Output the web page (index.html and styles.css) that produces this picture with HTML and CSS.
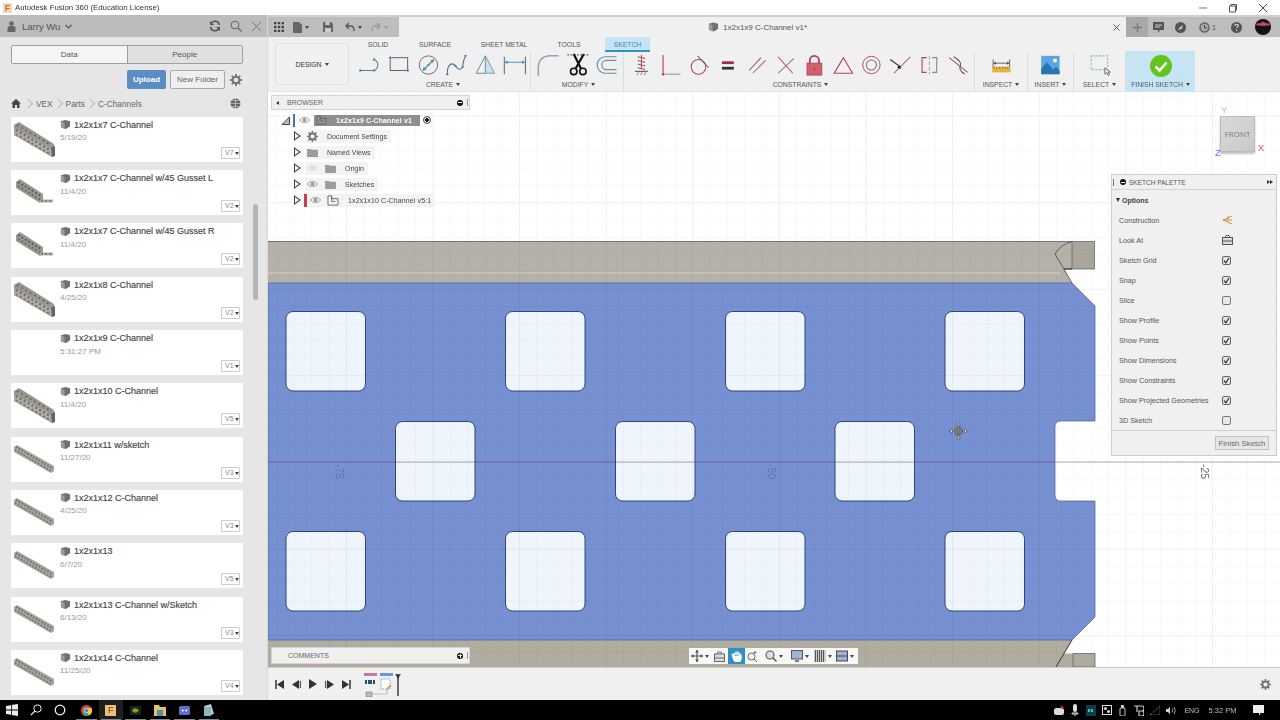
FILE: index.html
```html
<!DOCTYPE html>
<html lang="en">
<head>
<meta charset="utf-8">
<title>Autodesk Fusion 360</title>
<link rel="stylesheet" href="styles.css">
</head>
<body>
<svg class="defs" width="0" height="0" aria-hidden="true">
  <symbol id="box" viewBox="0 0 12 12"><path d="M1 2.500 6 1l5 1.500V8L6.500 11 1 9z" fill="#6f6f6f"/><path d="M1 2.500 5 4v7L1 9z" fill="#9a9a9a"/></symbol>
  <symbol id="folder" viewBox="0 0 12 10"><path d="M0 1h4l1 1h7v8H0z" fill="#9b9b9b"/></symbol>
  <symbol id="eye" viewBox="0 0 12 8"><path d="M.5 4C3 .5 9 .5 11.500 4 9 7.500 3 7.500.5 4z" fill="none" stroke="#8f8f8f"/><circle cx="6" cy="4" r="2" fill="#8f8f8f"/></symbol>
  <symbol id="tree-comp" viewBox="0 0 13 12"><path d="M1 1h4v3h7v7H1z" fill="none" stroke="#666" stroke-width="1"/><path d="M5 1v6h4" fill="none" stroke="#666"/></symbol>
  <symbol id="gear" viewBox="0 0 12 12"><circle cx="6" cy="6" r="3.300" fill="none" stroke="#777" stroke-width="2"/><path d="M6 0v2.500M6 9.500V12M0 6h2.500M9.500 6H12M1.800 1.800l1.800 1.800M8.400 8.400l1.800 1.800M1.800 10.200l1.800-1.800M8.400 3.600l1.800-1.800" stroke="#777" stroke-width="1.800"/></symbol>
  <symbol id="tick" viewBox="0 0 9 9"><rect x=".5" y=".5" width="8" height="8" rx="1.500" fill="#e4e4e4" stroke="#666"/><path d="M2 4.500 3.800 6.800 7 2" fill="none" stroke="#222" stroke-width="1.100"/></symbol>
  <symbol id="untick" viewBox="0 0 9 9"><rect x=".5" y=".5" width="8" height="8" rx="1.500" fill="#e8e8e8" stroke="#777"/></symbol>
  <symbol id="thumb-a" viewBox="0 0 42 38">
    <path d="M1 5 6 2 41 24 42 35 39 37 1 15z" fill="#98968f"/>
    <path d="M1 14 39 36 39 29 2 8z" fill="#b0ada6"/>
    <path d="M4 5 38 25" stroke="#55554f" stroke-width="1.500" stroke-dasharray="1.500 3.500"/>
    <path d="M3 10 37 30" stroke="#6d6c66" stroke-width="2.200" stroke-dasharray="2 2.500"/>
    <path d="M3 14 37 34" stroke="#75746e" stroke-width="1.800" stroke-dasharray="2 2.500"/>
    <path d="M38 28 42 26 42 36 39 37z" fill="#66655f"/>
  </symbol>
  <symbol id="thumb-b" viewBox="0 0 42 38">
    <path d="M3 9 7 6 30 21 30 27 27 30 3 15z" fill="#98968f"/>
    <path d="M5 9 28 23" stroke="#5a5a54" stroke-width="1.800" stroke-dasharray="2 2"/>
    <path d="M5 13 28 27" stroke="#6d6c66" stroke-width="1.800" stroke-dasharray="2 2"/>
    <path d="M27 28 40 28" stroke="#b0aea8" stroke-width="3"/>
    <path d="M28 28 40 28" stroke="#555" stroke-width="1" stroke-dasharray="2 2"/>
  </symbol>
  <symbol id="thumb-c" viewBox="0 0 42 38">
    <path d="M1 7 4 5 41 26 41 31 38 33 1 12z" fill="#a5a39c"/>
    <path d="M3 7 39 28" stroke="#5a5a55" stroke-width="1.300" stroke-dasharray="1.500 1.800"/>
    <path d="M2 10 38 31" stroke="#6a6a64" stroke-width="1.400" stroke-dasharray="1.500 1.800"/>
  </symbol>
</svg>

<header class="titlebar">
  <span class="app-logo">F</span>
  <span class="app-title">Autodesk Fusion 360 (Education License)</span>
  <div class="win-controls">
    <svg width="10" height="10" viewBox="0 0 10 10"><path d="M1 5h8" stroke="#777"/></svg>
    <svg width="10" height="10" viewBox="0 0 10 10"><path d="M1.500 3h6v6h-6zM3 3V1.500h5.500V7H7.500" fill="none" stroke="#555"/></svg>
    <svg width="10" height="10" viewBox="0 0 10 10"><path d="M1 1l8 8M9 1 1 9" stroke="#444"/></svg>
  </div>
</header>

<main class="app">
  <aside class="side">
    <div class="side-head">
      <svg width="9" height="11" viewBox="0 0 9 11"><circle cx="4.500" cy="2.500" r="2.300" fill="#666"/><path d="M.5 11V7q0-2 2-2h4q2 0 2 2v4z" fill="#666"/></svg>
      <span class="user">Larry Wu</span>
      <svg width="7" height="5" viewBox="0 0 7 5"><path d="M.5 1l3 3 3-3" fill="none" stroke="#555" stroke-width="1.200"/></svg>
      <span class="grow"></span>
      <svg class="h-act" width="12" height="12" viewBox="0 0 12 12"><path d="M10.500 5A4.600 4.600 0 0 0 2 3.500M1.500 7A4.600 4.600 0 0 0 10 8.500" fill="none" stroke="#555" stroke-width="1.500"/><path d="M1 1v4h4zM11 11V7H7z" fill="#555"/></svg>
      <svg class="h-act" width="12" height="12" viewBox="0 0 12 12"><circle cx="5" cy="5" r="3.800" fill="none" stroke="#666" stroke-width="1.100"/><path d="M8 8l3.500 3.500" stroke="#666" stroke-width="1.200"/></svg>
      <svg width="11" height="11" viewBox="0 0 11 11"><path d="M1 1l9 9M10 1l-9 9" stroke="#777"/></svg>
    </div>
    <div class="side-tabs"><span class="stab on">Data</span><span class="stab">People</span></div>
    <div class="side-actions">
      <button class="btn-upload">Upload</button>
      <button class="btn-folder">New Folder</button>
      <svg class="icon12" viewBox="0 0 12 12"><use href="#gear"/></svg>
    </div>
    <nav class="crumbs">
      <svg width="10" height="9" viewBox="0 0 10 9"><path d="M0 4.500 5 0l5 4.500H8.500V9H6V6H4v3H1.500V4.500z" fill="#444"/></svg>
      <span class="sep"></span><span>VEX</span><span class="sep"></span><span>Parts</span><span class="sep"></span><span>C-Channels</span>
      <span class="grow"></span>
      <svg width="11" height="11" viewBox="0 0 11 11"><circle cx="5.500" cy="5.500" r="5" fill="#666"/><path d="M0 5.500h11M5.500 0v11M2 2q3.500 2 7 0M2 9q3.500-2 7 0" stroke="#ddd" stroke-width=".6" fill="none"/></svg>
    </nav>
    <div class="cards">
      <article class="card"><svg class="thumb"><use href="#thumb-a"/></svg><div class="info"><div class="name"><svg class="cube"><use href="#box"/></svg>1x2x1x7 C-Channel</div><div class="date">5/19/20</div></div><span class="ver">V7<i class="car"></i></span></article>
      <article class="card"><svg class="thumb"><use href="#thumb-b"/></svg><div class="info"><div class="name"><svg class="cube"><use href="#box"/></svg>1x2x1x7 C-Channel w/45 Gusset L</div><div class="date">11/4/20</div></div><span class="ver">V2<i class="car"></i></span></article>
      <article class="card"><svg class="thumb"><use href="#thumb-b"/></svg><div class="info"><div class="name"><svg class="cube"><use href="#box"/></svg>1x2x1x7 C-Channel w/45 Gusset R</div><div class="date">11/4/20</div></div><span class="ver">V2<i class="car"></i></span></article>
      <article class="card"><svg class="thumb"><use href="#thumb-a"/></svg><div class="info"><div class="name"><svg class="cube"><use href="#box"/></svg>1x2x1x8 C-Channel</div><div class="date">4/25/20</div></div><span class="ver">V2<i class="car"></i></span></article>
      <article class="card"><span class="thumb"></span><div class="info"><div class="name"><svg class="cube"><use href="#box"/></svg>1x2x1x9 C-Channel</div><div class="date">5:31:27 PM</div></div><span class="ver">V1<i class="car"></i></span></article>
      <article class="card"><svg class="thumb"><use href="#thumb-a"/></svg><div class="info"><div class="name"><svg class="cube"><use href="#box"/></svg>1x2x1x10 C-Channel</div><div class="date">11/4/20</div></div><span class="ver">V5<i class="car"></i></span></article>
      <article class="card"><svg class="thumb"><use href="#thumb-c"/></svg><div class="info"><div class="name"><svg class="cube"><use href="#box"/></svg>1x2x1x11 w/sketch</div><div class="date">11/27/20</div></div><span class="ver">V3<i class="car"></i></span></article>
      <article class="card"><svg class="thumb"><use href="#thumb-c"/></svg><div class="info"><div class="name"><svg class="cube"><use href="#box"/></svg>1x2x1x12 C-Channel</div><div class="date">4/25/20</div></div><span class="ver">V3<i class="car"></i></span></article>
      <article class="card"><svg class="thumb"><use href="#thumb-c"/></svg><div class="info"><div class="name"><svg class="cube"><use href="#box"/></svg>1x2x1x13</div><div class="date">6/7/20</div></div><span class="ver">V5<i class="car"></i></span></article>
      <article class="card"><svg class="thumb"><use href="#thumb-c"/></svg><div class="info"><div class="name"><svg class="cube"><use href="#box"/></svg>1x2x1x13 C-Channel w/Sketch</div><div class="date">6/13/20</div></div><span class="ver">V3<i class="car"></i></span></article>
      <article class="card"><svg class="thumb"><use href="#thumb-c"/></svg><div class="info"><div class="name"><svg class="cube"><use href="#box"/></svg>1x2x1x14 C-Channel</div><div class="date">11/25/20</div></div><span class="ver">V4<i class="car"></i></span></article>
    </div>
    <div class="scroll-thumb"></div>
  </aside>

  <section class="work">
    <div class="tabbar">
      <div class="qat">
        <svg width="10" height="10" viewBox="0 0 10 10"><path d="M0 1h10M0 5h10M0 9h10" stroke="#444" stroke-width="2.400" stroke-dasharray="2.400 1.400"/></svg>
        <svg class="q2" width="9" height="11" viewBox="0 0 9 11"><path d="M0 0h6l3 3v8H0z" fill="#666"/></svg><i class="car q3"></i>
        <svg class="q4" width="10" height="10" viewBox="0 0 10 10"><path d="M0 0h8l2 2v8H0z" fill="#666"/><path d="M2.500 0h4v3h-4zM2 6h6v4H2z" fill="#ccc"/></svg>
        <svg class="q5" width="10" height="10" viewBox="0 0 10 10"><path d="M4 1 1 4l3 3M1 4h5q3 0 3 5" fill="none" stroke="#555" stroke-width="1.300"/></svg><i class="car q6"></i>
        <svg class="q7" width="10" height="10" viewBox="0 0 10 10"><path d="M6 1l3 3-3 3M9 4H4Q1 4 1 9" fill="none" stroke="#999" stroke-width="1.300"/></svg><i class="car q8"></i>
      </div>
      <div class="doc-tab">
        <svg class="doc-icon" width="11" height="12"><use href="#box"/></svg>
        <span>1x2x1x9 C-Channel v1*</span>
        <svg class="doc-close" width="7" height="7" viewBox="0 0 7 7"><path d="M.5.5l6 6M6.500.5l-6 6" stroke="#555"/></svg>
      </div>
      <div class="tools-right">
        <span class="plus"><svg width="9" height="9" viewBox="0 0 9 9"><path d="M4.500 0v9M0 4.500h9" stroke="#777" stroke-width="1.400"/></svg></span>
        <svg class="r1" width="11" height="11" viewBox="0 0 11 11"><path d="M0 0h11v8H7l-2 3V8H0z" fill="#555"/><path d="M2 3h7M2 5h5" stroke="#ccc"/></svg>
        <svg class="r2" width="11" height="11" viewBox="0 0 11 11"><circle cx="5.500" cy="5.500" r="5.500" fill="#555"/><path d="M3 8l2-3 3-2-1.500 4z" fill="#ccc"/></svg>
        <svg class="r3" width="11" height="11" viewBox="0 0 11 11"><circle cx="5.500" cy="5.500" r="4.500" fill="#aaa" stroke="#666" stroke-width="1.500"/><path d="M5.500 3v3H8" stroke="#444" fill="none"/></svg>
        <span class="r-num">1</span>
        <svg class="r4" width="11" height="11" viewBox="0 0 11 11"><circle cx="5.500" cy="5.500" r="5.500" fill="#555"/><path d="M3.800 4q.2-1.800 1.800-1.800 1.700 0 1.700 1.500c0 1.200-1.700 1.300-1.700 2.600M5.500 7.800v1.200" stroke="#ddd" fill="none" stroke-width="1.100"/></svg>
        <svg class="r5" width="16" height="16" viewBox="0 0 16 16"><circle cx="8" cy="8" r="8" fill="#111"/><path d="M.5 6Q3 3 5 4.500 8 1 11 4.500 14 3 15.500 6 8 8 .5 6z" fill="#b94a5a"/></svg>
      </div>
    </div>

    <div class="ribbon">
      <button class="design">DESIGN<i class="car"></i></button>
      <div class="ribbon-main">
        <div class="rtabs">
          <span class="rtab t1">SOLID</span><span class="rtab t2">SURFACE</span><span class="rtab t3">SHEET METAL</span><span class="rtab t4">TOOLS</span><span class="rtab t5">SKETCH</span>
        </div>
        <div class="groups">
          <div class="group g-create">
            <div class="icons">
              <svg class="ico" viewBox="0 0 28 24"><path d="M3 18H18M18 18A6.500 6.500 0 0 0 18 6" fill="none" stroke="#557f9c" stroke-width="1.100"/><g fill="#3b8fc0"><circle cx="3" cy="18" r="1.300"/><circle cx="18" cy="18" r="1.300"/><circle cx="18" cy="6" r="1.300"/></g></svg>
              <svg class="ico" viewBox="0 0 28 24"><rect x="4" y="4" width="19" height="14" fill="none" stroke="#666" stroke-width="1.100"/><g fill="#3b8fc0"><circle cx="4" cy="4" r="1.300"/><circle cx="23" cy="18" r="1.300"/></g></svg>
              <svg class="ico" viewBox="0 0 28 24"><circle cx="14" cy="12" r="10" fill="none" stroke="#666" stroke-width="1"/><path d="M8 18 20 6" stroke="#3b8fc0" stroke-width="1.200"/><path d="M20 6l-4 .8 3.200 3.200zM8 18l4-.8-3.200-3.200z" fill="#3b8fc0"/><circle cx="14" cy="12" r="1.200" fill="#3b8fc0"/></svg>
              <svg class="ico" viewBox="0 0 28 24"><path d="M4 22C4 10 10 9 13 13 16 18 20 18 21 12 21.500 8 23 4 24 2" fill="none" stroke="#666" stroke-width="1.100"/><g fill="#3b8fc0"><circle cx="4" cy="22" r="1.300"/><circle cx="13" cy="13" r="1.300"/><circle cx="21" cy="14" r="1.300"/><circle cx="24" cy="2" r="1.300"/></g></svg>
              <svg class="ico" viewBox="0 0 28 24"><path d="M14 2 4 21H14z" fill="#f2f2f2" stroke="#777"/><path d="M14 2 24 21H14z" fill="#cfe0e8" stroke="#6c9bb0"/></svg>
              <svg class="ico" viewBox="0 0 28 24"><path d="M3 3V22M26 3V22" stroke="#666" stroke-width="1.100"/><path d="M4 9H25" stroke="#3b8fc0"/><path d="M3.500 9l3-2v4zM25.500 9l-3-2v4z" fill="#3b8fc0"/></svg>
            </div>
            <div class="glabel">CREATE<i class="car"></i></div>
          </div>
          <div class="group g-modify">
            <div class="icons">
              <svg class="ico" viewBox="0 0 28 24"><path d="M3 24V15Q3 3 15 2H25" fill="none" stroke="#8fa5b0" stroke-width="1.600"/></svg>
              <svg class="ico" viewBox="0 0 28 24"><path d="M3 1H27" stroke="#333" stroke-dasharray="2 1.500"/><path d="M10 0 18 16M21 0 12 16" stroke="#111" stroke-width="2.400"/><circle cx="10" cy="19" r="3.500" fill="none" stroke="#111" stroke-width="1.800"/><circle cx="20" cy="19" r="3.500" fill="none" stroke="#111" stroke-width="1.800"/></svg>
              <svg class="ico" viewBox="0 0 28 24"><path d="M25 3H13A9 9 0 0 0 13 21H25" fill="none" stroke="#4b98c0" stroke-width="1.300"/><path d="M25 7H14A5 5 0 0 0 14 17H25" fill="none" stroke="#888" stroke-width="1.300"/></svg>
            </div>
            <div class="glabel">MODIFY<i class="car"></i></div>
          </div>
          <div class="group g-constraints">
            <div class="icons">
              <svg class="ico" viewBox="0 0 28 24"><path d="M14 1V16M10 3 18 5M10 7l8 2M10 11l8 2M10 15l8 2" stroke="#b54256" stroke-width="1.100"/><path d="M7 19H21" stroke="#666" stroke-width="1.300"/><path d="M9 23l2-3M13 23l2-3M17 23l2-3" stroke="#777"/></svg>
              <svg class="ico" viewBox="0 0 28 24"><path d="M6 1V22" stroke="#b54256" stroke-width="1.200"/><path d="M6 22H25" stroke="#999" stroke-width="1.200"/><circle cx="6" cy="22" r="1.400" fill="#b54256"/></svg>
              <svg class="ico" viewBox="0 0 28 24"><circle cx="13" cy="14" r="8" fill="none" stroke="#b54256" stroke-width="1.100"/><path d="M12 2 24 15" stroke="#666" stroke-width="1.100"/></svg>
              <svg class="ico" viewBox="0 0 28 24"><rect x="8" y="8" width="13" height="3" fill="#a92a44"/><rect x="8" y="14" width="13" height="3" fill="#333"/></svg>
              <svg class="ico" viewBox="0 0 28 24"><path d="M6 18 19 4" stroke="#b54256" stroke-width="1.100"/><path d="M10 21 24 7" stroke="#777" stroke-width="1.100"/></svg>
              <svg class="ico" viewBox="0 0 28 24"><path d="M6 3 22 21" stroke="#b54256" stroke-width="1.100"/><path d="M6 21 23 5" stroke="#777" stroke-width="1.100"/></svg>
              <svg class="ico" viewBox="0 0 28 24"><path d="M9 11V7a5 5 0 0 1 10 0v4" fill="none" stroke="#b54256" stroke-width="2"/><rect x="6" y="10" width="16" height="13" fill="#d0626f" stroke="#b54256"/><path d="M14 15v3" stroke="#8d2a3c"/></svg>
              <svg class="ico" viewBox="0 0 28 24"><path d="M14 4 24 21H4z" fill="none" stroke="#b54256" stroke-width="1.200"/></svg>
              <svg class="ico" viewBox="0 0 28 24"><circle cx="14" cy="12" r="9.500" fill="none" stroke="#b54256" stroke-width="1"/><circle cx="14" cy="12" r="5.500" fill="none" stroke="#777" stroke-width="1.100"/></svg>
              <svg class="ico" viewBox="0 0 28 24"><path d="M7 21 25 3" stroke="#b54256" stroke-width="1.100"/><path d="M3 6 14 14" stroke="#222" stroke-width="1.100"/><path d="M15 16l-4.500-.8 2.200-3z" fill="#111"/></svg>
              <svg class="ico" viewBox="0 0 28 24"><path d="M14 2V22" stroke="#999" stroke-dasharray="4 2"/><path d="M11 4H6V20H11" fill="none" stroke="#b54256" stroke-width="1.200"/><path d="M17 4H22V20H17" fill="none" stroke="#888" stroke-width="1.200"/></svg>
              <svg class="ico" viewBox="0 0 28 24"><path d="M4 4 24 20" stroke="#b54256" stroke-width="1.100"/><path d="M9 3Q18 8 16 13 14 18 21 22" fill="none" stroke="#555" stroke-width="1.100"/></svg>
            </div>
            <div class="glabel">CONSTRAINTS<i class="car"></i></div>
          </div>
          <div class="group g-inspect">
            <div class="icons one">
              <svg class="ico" viewBox="0 0 28 24"><path d="M5 6V14M23 6V14M6 10H22" stroke="#555"/><path d="M5 10l3-1.800v3.600zM23 10l-3-1.800v3.600z" fill="#555"/><rect x="4" y="14" width="20" height="6" fill="#e8b23c"/><path d="M6 14v2M9 14v2M12 14v2M15 14v2M18 14v2M21 14v2" stroke="#8a6a16"/></svg>
            </div>
            <div class="glabel">INSPECT<i class="car"></i></div>
          </div>
          <div class="group g-insert">
            <div class="icons one">
              <svg class="ico" viewBox="0 0 28 24"><rect x="4" y="2" width="20" height="20" fill="#5aa6e0"/><path d="M4 22V16L10 9 17 17 20 14 24 18V22z" fill="#2b74b4"/><circle cx="19" cy="7" r="2.200" fill="#fff"/></svg>
            </div>
            <div class="glabel">INSERT<i class="car"></i></div>
          </div>
          <div class="group g-select">
            <div class="icons one">
              <svg class="ico" viewBox="0 0 28 24"><rect x="5" y="2" width="18" height="15" fill="none" stroke="#8fc69a" stroke-width="1.300" stroke-dasharray="2.500 1.500"/><path d="M20 15v7l2-1.500 1.500 3 1.500-.7-1.500-3h2.500z" fill="#eee" stroke="#444" stroke-width=".8"/></svg>
            </div>
            <div class="glabel">SELECT<i class="car"></i></div>
          </div>
          <div class="group g-finish">
            <div class="icons one finish-icon">
              <svg width="24" height="24" viewBox="0 0 24 24"><circle cx="12" cy="12" r="11" fill="#62c41d"/><path d="M6.500 12.500 10.500 16.500 17.500 8.500" fill="none" stroke="#fff" stroke-width="2.600"/></svg>
            </div>
            <div class="glabel">FINISH SKETCH<i class="car"></i></div>
          </div>
        </div>
      </div>
    </div>

    <div class="canvas">
      <svg class="scene" viewBox="268 92 1012 575" width="1012" height="575">
        <defs>
          <pattern id="minor" patternUnits="userSpaceOnUse" x="692.300" y="462" width="17.320" height="17.320"><path d="M0 0V17.320M0 0H17.320" stroke="#000" stroke-opacity=".05" stroke-width="1"/></pattern>
          <pattern id="major" patternUnits="userSpaceOnUse" x="692.300" y="462" width="86.600" height="86.600"><path d="M0 0V86.600M0 0H86.600" stroke="#000" stroke-opacity=".06" stroke-width="1"/></pattern>
        </defs>
        <rect x="268" y="92" width="1012" height="575" fill="#fff"/>
        <path d="M268 241.500H1072V269H1064L1072 283H268z" fill="#b5b1a8"/>
        <path d="M268 241.500H1072" stroke="#5e5e5c" stroke-width=".8"/>
        <path d="M268 273H1060" stroke="#c6c2b8" stroke-width="2"/>
        <path d="M1072 241.500Q1061 244 1055 254L1072 283" fill="none" stroke="#555" stroke-width=".9"/>
        <rect x="1072" y="241.500" width="22.500" height="27.500" fill="#aaa69c" stroke="#666" stroke-width=".8"/>
        <path d="M1064 269H1072" stroke="#222" stroke-width="1.200"/>
        <path d="M268 640H1072L1064 653.500H1073V667H268z" fill="#b0ac9f"/>
        <path d="M1072 640 1056 667" stroke="#333"/>
        <path d="M1073 667V653.500H1095V667z" fill="#aeaa9f" stroke="#666" stroke-width=".8"/>
        <path d="M268 283H1072L1095 306V421H1061Q1055 421 1055 427V495Q1055 501 1061 501H1095V617L1072 640H268z" fill="#7690d2" stroke="#4a5c9a" stroke-width=".7"/>
        <g fill="#eff5fc" stroke="#24356f" stroke-width=".9">
          <rect x="286" y="311.500" width="79.500" height="79.500" rx="7"/>
          <rect x="505.500" y="311.500" width="79.500" height="79.500" rx="7"/>
          <rect x="725.500" y="311.500" width="79.500" height="79.500" rx="7"/>
          <rect x="945" y="311.500" width="79.500" height="79.500" rx="7"/>
          <rect x="395.500" y="421.500" width="79.500" height="79.500" rx="7"/>
          <rect x="615.500" y="421.500" width="79.500" height="79.500" rx="7"/>
          <rect x="835" y="421.500" width="79.500" height="79.500" rx="7"/>
          <rect x="286" y="531.500" width="79.500" height="79.500" rx="7"/>
          <rect x="505.500" y="531.500" width="79.500" height="79.500" rx="7"/>
          <rect x="725.500" y="531.500" width="79.500" height="79.500" rx="7"/>
          <rect x="945" y="531.500" width="79.500" height="79.500" rx="7"/>
        </g>
        <rect x="268" y="92" width="1012" height="575" fill="url(#minor)"/>
        <rect x="268" y="92" width="1012" height="575" fill="url(#major)"/>
        <path d="M268 462H1280" stroke="#7a3f60" stroke-opacity=".45" stroke-width="1"/>
        <g class="dim">
          <text transform="translate(336 464) rotate(90)">-75</text>
          <text transform="translate(768 464) rotate(90)">-50</text>
          <text class="dim-w" transform="translate(1201 464) rotate(90)">-25</text>
        </g>
        <g class="cursor">
          <circle cx="958.500" cy="431" r="4.500" fill="#666"/>
          <path d="M955 429h7M955 431h7M955 433h7" stroke="#9aa6c8" stroke-width=".6"/>
          <g fill="#e8ecf5" stroke="#333" stroke-width=".7">
            <circle cx="958.500" cy="424" r="1.400"/>
            <circle cx="958.500" cy="438" r="1.400"/>
            <circle cx="951.500" cy="431" r="1.400"/>
            <circle cx="965.500" cy="431" r="1.400"/>
          </g>
        </g>
      </svg>

      <div class="panel browser"><i class="back"></i><span>BROWSER</span><span class="grow"></span><span class="dot minus"></span><span class="bar"></span></div>
      <div class="tree">
        <div class="row r-root">
          <svg width="9" height="9" viewBox="0 0 9 9"><path d="M8.500 1V8.500H1z" fill="#bbb" stroke="#444"/></svg>
          <span class="mark blue"></span>
          <svg class="t-eye" width="11" height="8"><use href="#eye"/></svg>
          <span class="root-name"><svg width="11" height="10"><use href="#tree-comp"/></svg><b>1x2x1x9 C-Channel v1</b></span>
          <span class="radio"></span>
        </div>
        <div class="row r-doc"><i class="tri"></i><span class="rowbg"><svg width="11" height="11"><use href="#gear"/></svg><span>Document Settings</span></span></div>
        <div class="row r-view"><i class="tri"></i><span class="rowbg"><svg width="11" height="9"><use href="#folder"/></svg><span>Named Views</span></span></div>
        <div class="row r-origin"><i class="tri"></i><span class="rowbg"><svg class="faded" width="11" height="8"><use href="#eye"/></svg><svg width="11" height="9"><use href="#folder"/></svg><span>Origin</span></span></div>
        <div class="row r-sk"><i class="tri"></i><span class="rowbg"><svg width="11" height="8"><use href="#eye"/></svg><svg width="11" height="9"><use href="#folder"/></svg><span>Sketches</span></span></div>
        <div class="row r-comp"><i class="tri"></i><span class="mark red"></span><span class="rowbg"><svg width="11" height="8"><use href="#eye"/></svg><svg width="12" height="11"><use href="#tree-comp"/></svg><span>1x2x1x10 C-Channel v5:1</span></span></div>
      </div>

      <div class="cube-view">
        <span class="axis ay">Y</span><span class="axis ax">X</span><span class="axis az">Z</span>
        <div class="cube-face">FRONT</div>
      </div>

      <div class="palette">
        <div class="pal-head"><span class="bar lead"></span><span class="dot minus"></span><span>SKETCH PALETTE</span><span class="grow"></span><i class="fwd"></i><i class="fwd"></i></div>
        <div class="pal-body">
          <div class="pal-opt"><i class="down"></i>Options</div>
          <div class="pal-row"><span>Construction</span><svg class="pal-ctl" width="11" height="10" viewBox="0 0 11 10"><path d="M1 5 10 1M1 5h9M1 5l9 4" stroke="#c9913a" fill="none"/><path d="M6 1v8" stroke="#c9913a" stroke-dasharray="1 1"/></svg></div>
          <div class="pal-row"><span>Look At</span><svg class="pal-ctl" width="11" height="10" viewBox="0 0 11 10"><rect x=".5" y="2.500" width="10" height="7" fill="#ddd" stroke="#555"/><path d="M3 2.500 4 .5h3l1 2M1 6h9" stroke="#555" fill="none"/></svg></div>
          <div class="pal-row"><span>Sketch Grid</span><svg class="pal-ctl" width="9" height="9"><use href="#tick"/></svg></div>
          <div class="pal-row"><span>Snap</span><svg class="pal-ctl" width="9" height="9"><use href="#tick"/></svg></div>
          <div class="pal-row"><span>Slice</span><svg class="pal-ctl" width="9" height="9"><use href="#untick"/></svg></div>
          <div class="pal-row"><span>Show Profile</span><svg class="pal-ctl" width="9" height="9"><use href="#tick"/></svg></div>
          <div class="pal-row"><span>Show Points</span><svg class="pal-ctl" width="9" height="9"><use href="#tick"/></svg></div>
          <div class="pal-row"><span>Show Dimensions</span><svg class="pal-ctl" width="9" height="9"><use href="#tick"/></svg></div>
          <div class="pal-row"><span>Show Constraints</span><svg class="pal-ctl" width="9" height="9"><use href="#tick"/></svg></div>
          <div class="pal-row"><span>Show Projected Geometries</span><svg class="pal-ctl" width="9" height="9"><use href="#tick"/></svg></div>
          <div class="pal-row"><span>3D Sketch</span><svg class="pal-ctl" width="9" height="9"><use href="#untick"/></svg></div>
        </div>
        <div class="pal-foot"><button class="pal-finish">Finish Sketch</button></div>
      </div>

      <div class="panel comments"><span>COMMENTS</span><span class="grow"></span><span class="dot plusdot"></span><span class="bar"></span></div>

      <div class="navbar">
        <svg width="12" height="12" viewBox="0 0 12 12"><path d="M6 0v12M0 6h12" stroke="#555" stroke-width="1.200"/><path d="M6 0 4 2.500h4zM6 12l-2-2.500h4zM0 6l2.500-2v4zM12 6 9.500 4v4z" fill="#555"/></svg><i class="car"></i>
        <svg class="nv-cam" width="11" height="11" viewBox="0 0 11 11"><rect x=".5" y="3" width="10" height="7.500" fill="#ddd" stroke="#666"/><path d="M3 3l1-2h3l1 2M1 7h9" stroke="#666" fill="none"/></svg>
        <span class="nv-hand"><svg width="12" height="12" viewBox="0 0 12 12"><path d="M3 6V3M5 5V1.500M7 5V1.500M9 5.500V3M3 6 1.500 5 3 10q1 1.500 3 1.500h1q3 0 3-3V5" fill="#fff" stroke="#fff" stroke-width="1.500"/></svg></span>
        <svg class="nv-fit" width="11" height="11" viewBox="0 0 11 11"><circle cx="4.500" cy="5.500" r="3.500" fill="none" stroke="#666"/><path d="M7 8l3 3" stroke="#666"/><path d="M8 0v3M6.500 1.500h3" stroke="#777"/></svg>
        <svg class="nv-zoom" width="12" height="12" viewBox="0 0 12 12"><circle cx="5" cy="5" r="4" fill="#ddd" stroke="#555" stroke-width="1.100"/><path d="M8 8l3.500 3.500" stroke="#555" stroke-width="1.500"/></svg><i class="car"></i>
        <svg class="nv-disp" width="12" height="12" viewBox="0 0 12 12"><rect x=".5" y=".5" width="11" height="8.500" fill="#9fb6d0" stroke="#556"/><path d="M4 11h4" stroke="#556" stroke-width="1.500"/></svg><i class="car"></i>
        <svg class="nv-grid" width="12" height="12" viewBox="0 0 12 12"><rect width="12" height="12" fill="#ccc"/><path d="M1.500 0v12M3.500 0v12M5.500 0v12M7.500 0v12M9.500 0v12" stroke="#555"/></svg><i class="car"></i>
        <svg class="nv-view" width="12" height="12" viewBox="0 0 12 12"><rect x=".5" y="1" width="11" height="10" fill="#9fb6d0" stroke="#445"/><path d="M.5 6h11" stroke="#445"/></svg><i class="car"></i>
      </div>
    </div>

    <div class="timeline">
      <svg class="tl" width="9" height="9" viewBox="0 0 9 9"><path d="M1 0v9" stroke="#333" stroke-width="1.500"/><path d="M9 0v9L2 4.500z" fill="#333"/></svg>
      <svg class="tl" width="9" height="9" viewBox="0 0 9 9"><path d="M7 0v9L0 4.500z" fill="#333"/><path d="M8.300 1v7" stroke="#333"/></svg>
      <svg class="tl" width="9" height="10" viewBox="0 0 9 10"><path d="M1 0v10l8-5z" fill="#333"/></svg>
      <svg class="tl" width="9" height="9" viewBox="0 0 9 9"><path d="M2 0v9l7-4.500z" fill="#333"/><path d="M.7 1v7" stroke="#333"/></svg>
      <svg class="tl" width="9" height="9" viewBox="0 0 9 9"><path d="M0 0v9l7-4.500z" fill="#333"/><path d="M8 0v9" stroke="#333" stroke-width="1.500"/></svg>
      <svg class="tl-track" width="38" height="26" viewBox="0 0 38 26">
        <rect x="0" y="2" width="13" height="3" fill="#c87a9a"/><rect x="16" y="2" width="13" height="3" fill="#6d95d6"/>
        <path d="M2 9v4M5 9v4M7 9v4M10 9v4" stroke="#2b4f7a" stroke-width="2"/>
        <path d="M17 8h9v10h-9z" fill="#fff" stroke="#7aa4c9" stroke-dasharray="1.500 1"/>
        <path d="M23 18l4-4" stroke="#d88a2a" stroke-width="1.500"/>
        <rect x="2" y="21" width="6" height="5" fill="#bbb" stroke="#777" stroke-width=".6"/><path d="M9 23h14v-5" fill="none" stroke="#bbb"/>
        <path d="M31 3h6l-3 5z" fill="#555"/><path d="M34 4v21" stroke="#222" stroke-width="1.300"/>
      </svg>
      <span class="grow"></span>
      <svg class="tl-gear" width="11" height="11"><use href="#gear"/></svg>
    </div>
  </section>
</main>

<footer class="taskbar">
  <div class="tb-left">
    <svg class="tb first" width="12" height="12" viewBox="0 0 12 12"><path d="M0 2 5 1.200V5.600H0zM5.800 1 12 0V5.600H5.800zM0 6.400H5V10.800L0 10zM5.800 6.400H12V12L5.800 11z" fill="#eee"/></svg>
    <svg class="tb" width="12" height="12" viewBox="0 0 12 12"><circle cx="7.500" cy="4.500" r="3.700" fill="none" stroke="#eee"/><path d="M5 7 .8 11.200" stroke="#eee" stroke-width="1.200"/></svg>
    <svg class="tb" width="12" height="12" viewBox="0 0 12 12"><circle cx="6" cy="6" r="4.800" fill="none" stroke="#eee" stroke-width="1.300"/></svg>
    <span class="app-slot used"><svg width="11" height="11" viewBox="0 0 11 11"><circle cx="5.500" cy="5.500" r="5.500" fill="#d9473c"/><path d="M5.500 5.500 1 8.500A5.500 5.500 0 0 0 8 10.500z" fill="#3ba356"/><path d="M5.500 5.500 8 10.500A5.500 5.500 0 0 0 10.500 3H5.500z" fill="#f4c430"/><circle cx="5.500" cy="5.500" r="2.400" fill="#4a8ae8" stroke="#eee" stroke-width=".7"/></svg></span>
    <span class="app-slot active used"><span class="fx">F</span></span>
    <span class="app-slot used"><svg width="11" height="9" viewBox="0 0 11 9"><rect width="11" height="9" fill="#222"/><path d="M2 4.500Q5 0 9 4.500 5 9 2 4.500z" fill="#74a823"/></svg></span>
    <span class="app-slot used"><svg width="12" height="11" viewBox="0 0 12 11"><path d="M0 0h5l1 2h6v9H0z" fill="#e8c460"/><rect x="3" y="5" width="6" height="6" fill="#4a90c4"/></svg></span>
    <span class="app-slot used"><svg width="11" height="9" viewBox="0 0 11 9"><rect width="11" height="9" rx="1.500" fill="#6170c6"/><circle cx="3.700" cy="4.500" r="1" fill="#fff"/><circle cx="7.300" cy="4.500" r="1" fill="#fff"/></svg></span>
    <span class="app-slot used"><svg width="10" height="12" viewBox="0 0 10 12"><path d="M0 2 7 0 10 10 3 12z" fill="#b5d0d8"/><path d="M0 3h7v9H0z" fill="#8fb4bf"/></svg></span>
  </div>
  <div class="tray">
    <svg width="10" height="9" viewBox="0 0 10 9"><rect y="2" width="10" height="7" rx="2.500" fill="#ddd"/><circle cx="8" cy="1.500" r="1.500" fill="#d33"/></svg>
    <svg width="8" height="12" viewBox="0 0 8 12"><rect x="2" width="4" height="8" rx="2" fill="#ddd"/><path d="M1 9h6v1H1zM4 10v2" stroke="#ddd"/></svg>
    <svg width="10" height="11" viewBox="0 0 10 11"><rect width="10" height="11" fill="#143a4a"/><path d="M2 5.500h6" stroke="#36c9a8" stroke-width="3" stroke-dasharray="2 1"/></svg>
    <svg width="10" height="10" viewBox="0 0 10 10"><rect x=".5" y=".5" width="9" height="9" fill="none" stroke="#ddd"/><circle cx="3.500" cy="3.500" r="1.500" fill="#ddd"/><circle cx="6.500" cy="6.500" r="1.500" fill="#ddd"/></svg>
    <svg width="8" height="11" viewBox="0 0 8 11"><rect x="1" y="3" width="5" height="8" rx="1" fill="none" stroke="#ccc"/><rect x="2" y="0" width="3" height="3" fill="#ccc"/></svg>
    <svg width="10" height="11" viewBox="0 0 10 11"><path d="M0 1h6M3 1v6M5 1h3q2 0 2 2.500T8 6H5v5h3q2 0 2-2.500T8 6" fill="none" stroke="#ccc" stroke-width="1.200"/></svg>
    <svg width="10" height="9" viewBox="0 0 10 9"><path d="M0 9 10 0V9z" fill="none" stroke="#999" stroke-dasharray="1 1"/></svg>
    <svg width="10" height="9" viewBox="0 0 10 9"><path d="M0 3h2l2-2.500v8L2 6H0z" fill="#ccc"/><path d="M6 2.500q1.500 2 0 4M8 1q2.500 3.500 0 7" fill="none" stroke="#ccc" stroke-width=".8"/></svg>
    <span class="tray-lang">ENG</span>
    <span class="tray-time">5:32 PM</span>
    <svg class="tray-note" width="11" height="11" viewBox="0 0 11 11"><path d="M0 0h11v8H7.500L6 11V8H0z" fill="#eee"/></svg>
  </div>
</footer>
</body>
</html>
```
FILE: styles.css
```css
* { box-sizing: border-box; }
html, body { margin: 0; padding: 0; }
body {
  width: 1280px;
  height: 720px;
  overflow: hidden;
  display: flex;
  flex-direction: column;
  font-family: "Liberation Sans", Arial, sans-serif;
  background: #fff;
  color: #444;
}
svg { display: block; flex: none; }
button { font-family: inherit; margin: 0; padding: 0; }
i { display: block; font-style: normal; }
.defs { position: absolute; }
.grow { flex: 1; }

.car {
  display: inline-block;
  width: 0;
  height: 0;
  border-left: 2px solid transparent;
  border-right: 2px solid transparent;
  border-top: 3px solid #444;
  margin-left: 3px;
  vertical-align: 1px;
  flex: none;
}

/* soft video-capture look of the reference */
.titlebar, .app, .taskbar { filter: blur(.3px); }

/* title bar */
.titlebar {
  height: 15px;
  flex: none;
  display: flex;
  align-items: center;
  padding-left: 3px;
  background: #fff;
  font-size: 7.800px;
  color: #333;
}
.app-logo {
  width: 9px;
  height: 10px;
  background: #f1d9b5;
  color: #d0671e;
  font-weight: 700;
  font-size: 9px;
  line-height: 10px;
  text-align: center;
  margin-right: 3px;
}
.win-controls { margin-left: auto; display: flex; gap: 20px; padding-right: 12px; }

/* layout */
.app { flex: 1; display: flex; min-height: 0; }

/* left panel */
.side { width: 268px; flex: none; background: #e6e6e6; position: relative; display: flex; flex-direction: column; overflow: hidden; border-right: 1px solid #d8d8d8; }
.side-head {
  height: 22px;
  flex: none;
  background: #bcbcbc;
  display: flex;
  align-items: center;
  padding: 0 5px 0 7px;
  gap: 4px;
}
.h-act { margin-right: 5px; }
.user { font-size: 9.500px; color: #555; margin: 0 1px 0 2px; }
.side-tabs {
  margin: 8px 24px 0 11px;
  height: 19px;
  display: flex;
  border: 1px solid #9e9e9e;
  border-radius: 2px;
  font-size: 8px;
  color: #555;
}
.stab { flex: 1; text-align: center; line-height: 17px; background: #e0e0e0; }
.stab.on { background: #f5f5f5; border-right: 1px solid #9e9e9e; }
.side-actions { display: flex; align-items: center; height: 19px; margin: 6px 0 0 127px; }
.btn-upload { width: 39px; height: 19px; background: #5b8cc4; color: #fff; border: 0; border-radius: 2px; font-size: 8px; font-weight: 700; }
.btn-folder { width: 55px; height: 19px; margin-left: 4px; background: #efefef; color: #666; border: 1px solid #aaa; border-radius: 2px; font-size: 8px; }
.icon12 { width: 12px; height: 12px; margin-left: 5px; }
.crumbs {
  display: flex;
  align-items: center;
  height: 12px;
  margin: 9px 26px 0 11px;
  font-size: 8.300px;
  color: #666;
}
.sep {
  width: 5px;
  height: 5px;
  margin: 0 5px 0 3px;
  border-top: 1px solid #c4c4c4;
  border-right: 1px solid #c4c4c4;
  transform: rotate(45deg) scale(1.400);
}
.crumbs svg:first-child { margin-right: 2px; }
.cards { margin: 7.700px 0 0 11px; width: 232px; flex: 1; }
.card {
  height: 45px;
  margin-bottom: 8.330px;
  background: #fff;
  display: flex;
  position: relative;
}
.thumb { width: 42px; height: 38px; margin: 3px 5px 0 2px; flex: none; display: block; }
.info { flex: 1; padding-top: 2.500px; }
.name { display: flex; align-items: center; gap: 3px; height: 11px; font-size: 9px; color: #444; white-space: nowrap; -webkit-text-stroke: .15px #444; }
.cube { width: 11px; height: 11px; }
.date { font-size: 8px; color: #999; margin-top: 3px; }
.ver {
  position: absolute;
  right: 3px;
  bottom: 3px;
  width: 19px;
  height: 12px;
  background: #fff;
  border: 1px solid #ccc;
  border-radius: 1px;
  font-size: 7px;
  line-height: 10px;
  color: #888;
  padding-left: 3px;
}
.ver .car { margin-left: 1px; vertical-align: 0; }
.scroll-thumb { position: absolute; left: 253px; top: 189px; width: 5px; height: 96px; border-radius: 3px; background: #b4b4b4; }

/* right work area */
.work { flex: 1; min-width: 0; display: flex; flex-direction: column; }
.tabbar {
  height: 22px;
  flex: none;
  display: flex;
  border-top: 2px solid #cfcfcf;
  background: #f0f0f0;
}
.qat { width: 131px; background: #bdbdbd; display: flex; align-items: center; padding-left: 6px; }
.q2 { margin-left: 9px; }
.q3 { margin-left: 3px; }
.q4 { margin-left: 14px; }
.q5 { margin-left: 12px; }
.q6 { margin-left: 3px; }
.q7 { margin-left: 9px; }
.q8 { margin-left: 3px; border-top-color: #999; }
.doc-tab { flex: 1; display: flex; align-items: center; padding-left: 309px; font-size: 8px; color: #555; }
.doc-icon { margin-right: 4px; }
.doc-close { margin-left: auto; margin-right: 6px; }
.tools-right { width: 154px; flex: none; background: #bdbdbd; display: flex; align-items: center; }
.plus { width: 22px; height: 20px; background: #a9a9a9; display: flex; align-items: center; justify-content: center; }
.r1 { margin-left: 5px; }
.r2 { margin-left: 11px; }
.r3 { margin-left: 13px; }
.r-num { font-size: 7px; margin-left: 2px; color: #555; }
.r4 { margin-left: 15px; }
.r5 { margin-left: 13px; }

/* ribbon */
.ribbon { height: 55px; flex: none; display: flex; background: #f0f0f0; padding-left: 7px; border-bottom: 1px solid #e4e4e4; }
.design {
  width: 74px;
  height: 42px;
  margin: 6px 7px 0 0;
  background: #f0f0f0;
  border: 1px solid #e0e0e0;
  border-radius: 4px;
  font-size: 6.800px;
  color: #333;
}
.ribbon-main { flex: 1; display: flex; flex-direction: column; }
.rtabs { height: 15px; display: flex; font-size: 6.800px; color: #555; }
.rtab { text-align: center; line-height: 15px; }
.t1 { width: 44px; }
.t2 { width: 70px; }
.t3 { width: 68px; }
.t4 { width: 62px; }
.t5 { width: 45px; margin-left: 5px; background: #c6e4f3; color: #2e8cbf; border-bottom: 2px solid #2f95c8; }
.groups { flex: 1; display: flex; }
.group { display: flex; flex-direction: column; align-items: center; border-right: 1px solid #dcdcdc; margin-top: 0; height: 39px; }
.icons { display: flex; height: 24px; margin-top: 1px; }
.ico { width: 28.800px; height: 24px; padding: 1px 0; overflow: visible; }
.icons.one { justify-content: center; }
.glabel { font-size: 6.800px; color: #555; line-height: 15px; white-space: nowrap; }
.g-create { width: 175px; align-items: flex-start; }
.g-create .glabel { align-self: center; }
.g-modify { width: 93px; padding-left: 3px; align-items: flex-start; }
.g-modify .glabel { align-self: center; }
.g-constraints { width: 351px; padding-left: 3px; align-items: flex-start; }
.g-constraints .glabel { align-self: center; }
.g-inspect { width: 53px; }
.g-insert { width: 46px; }
.g-select { width: 52px; }
.g-finish { width: 69px; height: 41px; margin-top: -1px; background: #c6e4f3; border-right: 0; }
.finish-icon { margin-top: 3px; height: 23px; }

/* canvas */
.canvas { flex: 1; position: relative; overflow: hidden; min-height: 0; }
.scene { position: absolute; left: 0; top: 0; }
.dim text { font-size: 10.500px; fill: #5a74b8; font-family: "Liberation Sans", sans-serif; }
.dim .dim-w { fill: #666; }
.panel {
  position: absolute;
  left: 3px;
  width: 199px;
  background: #f0f0f0;
  border: 1px solid #d4d4d4;
  display: flex;
  align-items: center;
  font-size: 7px;
  color: #666;
}
.browser { top: 3px; height: 15px; padding: 0 1px 0 4px; }
.comments { top: 555px; height: 17px; padding: 0 1px 0 16px; }
.back { width: 0; height: 0; border: 2px solid transparent; border-right: 3px solid #333; border-left: 0; margin-right: 8px; }
.dot { width: 6px; height: 6px; border-radius: 50%; background: #111; position: relative; flex: none; }
.minus::after { content: ""; position: absolute; left: 1px; right: 1px; top: 2.500px; height: 1px; background: #fff; }
.plusdot::after { content: ""; position: absolute; left: 1px; right: 1px; top: 2.500px; height: 1px; background: #fff; }
.plusdot::before { content: ""; position: absolute; top: 1px; bottom: 1px; left: 2.500px; width: 1px; background: #fff; }
.bar { width: 1px; height: 7px; background: #999; margin-left: 4px; flex: none; }

.tree { position: absolute; left: 13px; top: 20px; display: flex; flex-direction: column; font-size: 7px; color: #444; }
.row { display: flex; align-items: center; height: 16px; position: relative; }
.r-root { margin-left: 0; height: 16px; }
.mark { width: 2px; height: 13px; flex: none; }
.mark.blue { background: #3f72c4; margin-left: 3px; }
.mark.red { background: #cc3a5a; width: 3px; margin-left: 4px; }
.t-eye { margin: 0 4px; }
.root-name { display: flex; align-items: center; height: 11px; background: #8f8f8f; color: #fff; width: 106px; padding-left: 2px; margin-right: 3px; }
.root-name svg { margin-right: 9px; }
.root-name b { font-size: 7px; letter-spacing: .1px; }
.radio { width: 8px; height: 8px; border: 1px solid #444; border-radius: 50%; background: radial-gradient(circle, #111 40%, #eee 44%); }
.tri { width: 0; height: 0; margin-left: 13px; border-left: 7px solid #444; border-top: 5px solid transparent; border-bottom: 5px solid transparent; position: relative; }
.tri::after { content: ""; position: absolute; left: -6px; top: -3.500px; border-left: 4.500px solid #f5f5f5; border-top: 3.500px solid transparent; border-bottom: 3.500px solid transparent; }
.rowbg { display: flex; align-items: center; height: 13px; background: #f3f3f3; margin-left: 4px; padding-right: 4px; letter-spacing: .05px; }
.r-doc .rowbg svg, .r-view .rowbg svg { margin: 0 9px 0 2px; }
.r-origin .rowbg svg:first-child, .r-sk .rowbg svg:first-child { margin: 0 7px 0 2px; }
.r-origin .rowbg svg:nth-child(2), .r-sk .rowbg svg:nth-child(2) { margin-right: 9px; }
.r-comp .mark { margin-left: 3px; }
.r-comp .rowbg { margin-left: 0; letter-spacing: .12px; }
.r-comp .rowbg svg:first-child { margin: 0 6px 0 3px; }
.r-comp .rowbg svg:nth-child(2) { margin-right: 9px; }
.faded { opacity: .25; }

.cube-view { position: absolute; left: 952px; top: 24px; width: 35px; height: 36px; }
.cube-face {
  width: 35px;
  height: 36px;
  background: linear-gradient(135deg, #dadada, #c8c8c8);
  border: 1px solid #bbb;
  box-shadow: 0 2px 2px #c0c0c0;
  font-family: "Open Sans", sans-serif;
  font-size: 8px;
  color: #777;
  text-align: center;
  line-height: 33px;
}
.axis { position: absolute; font-size: 9.500px; }
.ay { left: 1px; top: -12px; color: #8fdc9a; }
.ax { left: 38px; top: 26px; color: #d9506e; }
.az { left: -5px; top: 31px; color: #6c6cd8; }

.palette {
  position: absolute;
  left: 843px;
  top: 82px;
  width: 166px;
  height: 282px;
  background: #f0f0f0;
  border: 1px solid #ccc;
  font-size: 7.200px;
  color: #555;
  display: flex;
  flex-direction: column;
}
.pal-head { height: 15px; flex: none; display: flex; align-items: center; gap: 3px; padding: 0 3px 0 1px; border-bottom: 1px solid #d4d4d4; font-size: 6.500px; }
.bar.lead { margin: 0 3px 0 0; background: #777; }
.fwd { width: 0; height: 0; border: 2.500px solid transparent; border-left: 3px solid #333; border-right: 0; margin-left: -3px; }
.pal-body { flex: 1; }
.pal-opt { height: 20px; display: flex; align-items: center; padding-left: 4px; font-weight: 700; font-size: 7px; color: #444; }
.down { width: 0; height: 0; border-left: 2.500px solid transparent; border-right: 2.500px solid transparent; border-top: 4px solid #333; margin-right: 2px; }
.pal-row { height: 20px; display: flex; align-items: center; padding-left: 7px; position: relative; }
.pal-ctl { position: absolute; left: 110px; }
.pal-foot { height: 25px; flex: none; border-top: 1px solid #ccc; display: flex; align-items: center; justify-content: flex-end; padding-right: 7px; }
.pal-finish { width: 54px; height: 14px; background: #e6e6e6; border: 1px solid #c4c4c4; font-size: 7.800px; color: #666; }

.navbar { position: absolute; left: 421px; top: 556px; height: 16px; width: 169px; background: #f7f7f7; display: flex; align-items: center; padding-left: 2px; }
.navbar .car { margin-left: 2px; }
.nv-cam { margin-left: 5px; }
.nv-hand { width: 17px; height: 16px; background: #2d8fc4; margin-left: 3px; display: flex; align-items: center; justify-content: center; }
.nv-fit { margin-left: 2px; }
.nv-zoom { margin-left: 7px; }
.nv-disp { margin-left: 8px; }
.nv-grid { margin-left: 5px; }
.nv-view { margin-left: 4px; }

/* timeline */
.timeline { height: 33px; flex: none; display: flex; align-items: center; background: #f0f0f0; border-top: 1px solid #ccc; padding-left: 7px; }
.tl { margin-right: 7.700px; }
.tl-track { margin-left: 6px; }
.tl-gear { margin-right: 9px; }

/* taskbar */
.taskbar { height: 20px; flex: none; background: #000; display: flex; align-items: center; justify-content: space-between; }
.tb-left { display: flex; align-items: center; height: 20px; }
.tb { margin-right: 12px; }
.tb.first { margin-left: 6px; }
.app-slot { width: 24.500px; height: 20px; display: flex; align-items: center; justify-content: center; position: relative; }
.tb:nth-child(3) { margin-right: 8px; }
.app-slot.used::after { content: ""; position: absolute; left: 2px; right: 2px; bottom: 0; height: 1px; background: #888; }
.active { background: #1f1f1f; }
.fx { width: 11px; height: 11px; background: #e8c27c; color: #c0551a; font-size: 9px; font-weight: 700; text-align: center; line-height: 11px; }
.tray { display: flex; align-items: center; padding-right: 16.500px; font-size: 7px; color: #bbb; }
.tray svg { width: 10px; margin: 0 3px; }
.tray .tray-note { width: 11px; margin: 0 0 0 16px; }
.tray-lang { margin-left: 5px; }
.tray-time { margin-left: 9px; font-size: 7.500px; white-space: nowrap; }
```
